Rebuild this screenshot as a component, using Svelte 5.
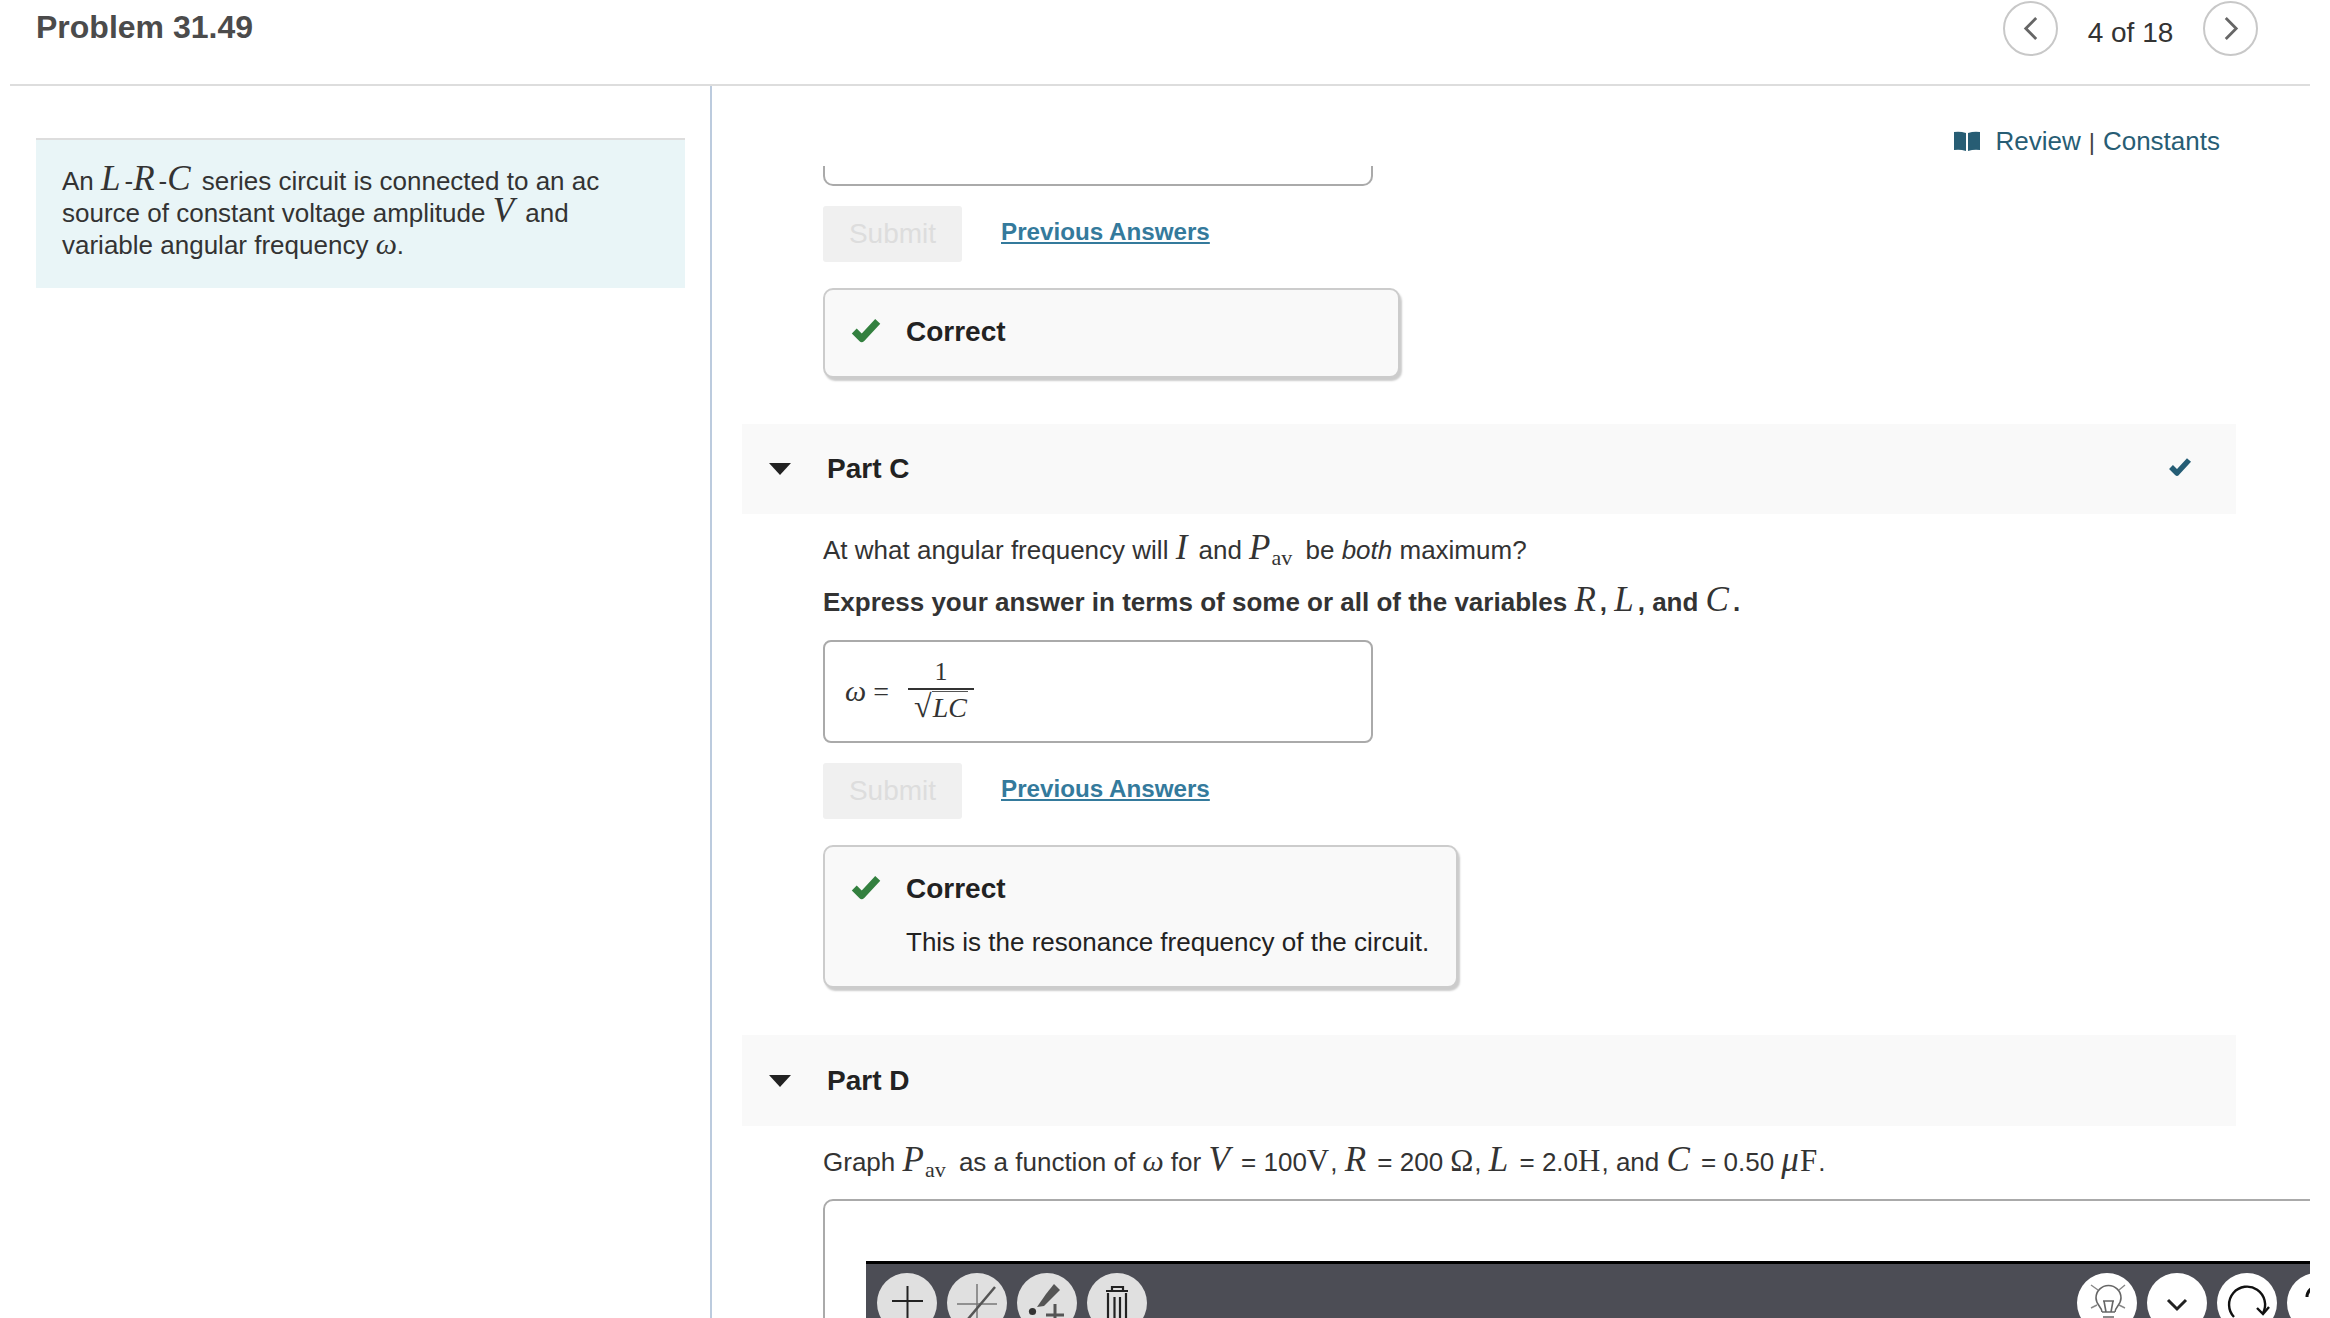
<script>
  const leftTools = ["plus", "line", "pen", "trash"];
</script>

{#snippet check()}
  <svg class="okay" viewBox="0 0 30 24" aria-hidden="true">
    <path d="M4 13l7 7L26 4" fill="none" stroke="#33803f" stroke-width="6.5" stroke-linejoin="round" />
  </svg>
{/snippet}

{#snippet submitRow()}
  <div class="actions">
    <button class="submit" disabled>Submit</button>
    <a class="prev" href="#prev">Previous Answers</a>
  </div>
{/snippet}

<div class="page">
  <header>
    <h1>Problem 31.49</h1>
    <nav>
      <button class="round" aria-label="Previous">
        <svg viewBox="0 0 54 54"><path d="M33 16L22 27l11 11" /></svg>
      </button>
      <span class="count">4 of 18</span>
      <button class="round" aria-label="Next">
        <svg viewBox="0 0 54 54"><path d="M22 16l11 11-11 11" /></svg>
      </button>
    </nav>
  </header>

  <div class="columns">
    <aside>
      <div class="intro">
        An <span class="m">L</span>-<span class="m">R</span>-<span class="m">C</span> series circuit is connected to an ac<br />
        source of constant voltage amplitude <span class="m">V</span> and<br />
        variable angular frequency <i class="w">ω</i>.
      </div>
    </aside>

    <main>
      <div class="links">
        <svg class="book" viewBox="0 0 26 21" aria-hidden="true">
          <path d="M0 1q6-1 12 1v18q-6-2-12-1zM14 2q6-2 12-1v18q-6-1-12 1z" fill="#275d74" />
        </svg>
        <a href="#review">Review</a>
        <span class="bar">|</span>
        <a href="#constants">Constants</a>
      </div>

      <div class="scroll">
        <div class="stub"></div>
        {@render submitRow()}
        <div class="feedback short">
          {@render check()}
          <strong>Correct</strong>
        </div>

        <div class="part first-part">
          <span class="tri"></span>
          <span class="part-name">Part C</span>
          <svg class="done" viewBox="0 0 24 19" aria-hidden="true">
            <path d="M3 10l6 6L21 3" fill="none" stroke="#255d75" stroke-width="5.5" stroke-linejoin="round" />
          </svg>
        </div>
        <div class="body">
          <p class="q">At what angular frequency will <span class="m">I</span> and <span class="m tight">P</span><sub>av</sub> be <em>both</em> maximum?</p>
          <p class="q b">Express your answer in terms of some or all of the variables <span class="m">R</span>, <span class="m">L</span>, and <span class="m">C</span>.</p>

          <div class="answer">
            <span class="eq"><i class="w">ω</i> =</span>
            <span class="frac">
              <span class="num">1</span>
              <span class="den"><span class="root">√</span><span class="rad">LC</span></span>
            </span>
          </div>

          {@render submitRow()}
          <div class="feedback tall">
            {@render check()}
            <strong>Correct</strong>
            <p>This is the resonance frequency of the circuit.</p>
          </div>
        </div>

        <div class="part second-part">
          <span class="tri"></span>
          <span class="part-name">Part D</span>
        </div>
        <div class="body">
          <p class="q">Graph <span class="m tight">P</span><sub>av</sub> as a function of <i class="w">ω</i> for <span class="m">V</span> = 100<span class="u">V</span>, <span class="m">R</span> = 200 <span class="u">Ω</span>, <span class="m">L</span> = 2.0<span class="u">H</span>, and <span class="m">C</span> = 0.50 <span class="m tight">μ</span><span class="u">F</span>.</p>

          <div class="graph">
            <div class="toolbar">
              <div class="tools">
                {#each leftTools as tool}
                  <button class="tool" aria-label={tool}>
                    <svg viewBox="0 0 60 60">
                      {#if tool === "plus"}
                        <path d="M30.5 13v32M15 28h31" stroke="#222" stroke-width="2" fill="none" />
                      {:else if tool === "line"}
                        <path d="M30 11v38M10 31h40" stroke="#777" stroke-width="1.5" fill="none" />
                        <path d="M16 52L48 14" stroke="#555" stroke-width="2.5" fill="none" />
                      {:else if tool === "pen"}
                        <path d="M29 21L37 11l6 6L27 33l-7 1z" fill="#555" />
                        <circle cx="15.5" cy="38.5" r="3.6" fill="#333" />
                        <path d="M38 31v25M29 42h18" stroke="#555" stroke-width="3" fill="none" />
                      {:else}
                        <path d="M19 18h22M25 17v-3h11v3M21 20v36h18V20M27.5 24v30M33 24v30" stroke="#222" stroke-width="2.2" fill="none" />
                      {/if}
                    </svg>
                  </button>
                {/each}
              </div>
              <div class="tools right">
                <button class="tool white" aria-label="hint">
                  <svg viewBox="0 0 60 60">
                    <path d="M25 39c0-5-6-7-6-14a12.5 12.5 0 0 1 25 0c0 7-6 9-6 14M26 28h11M27 28l2 11M36 28l-2 11M25 39h13M26 44h11" stroke="#666" stroke-width="1.6" fill="none" />
                    <path d="M14 12l7 5M48 12l-6 5M14 35l6-3M48 35l-6-3" stroke="#888" stroke-width="1.4" />
                  </svg>
                </button>
                <button class="tool white" aria-label="more">
                  <svg viewBox="0 0 60 60"><path d="M21 27l9 9 9-9" stroke="#222" stroke-width="3" fill="none" /></svg>
                </button>
                <button class="tool white" aria-label="reset">
                  <svg viewBox="0 0 60 60">
                    <path d="M46 40A18 18 0 1 0 17 44" stroke="#111" stroke-width="2.4" fill="none" />
                    <path d="M40 35l6 6 6-7" stroke="#111" stroke-width="2.4" fill="none" />
                  </svg>
                </button>
                <button class="tool white" aria-label="help">
                  <svg viewBox="0 0 60 60"><path d="M20 24a10 10 0 0 1 20 0c0 7-10 8-10 16" stroke="#111" stroke-width="3" fill="none" /></svg>
                </button>
              </div>
            </div>
          </div>
        </div>
      </div>
    </main>
  </div>
</div>

<style>
  :global(body) {
    background: #fff;
  }
  .page {
    width: 2330px;
    height: 1318px;
    overflow: hidden;
    font-family: "Liberation Sans", Arial, sans-serif;
    font-size: 26px;
    color: #333;
  }
  header {
    margin-left: 10px;
    width: 2300px;
    height: 86px;
    box-sizing: border-box;
    border-bottom: 2px solid #ddd;
    display: flex;
    justify-content: space-between;
  }
  h1 {
    margin: 8px 0 0 26px;
    font-size: 32px;
    line-height: 38px;
    color: #4b4b4b;
  }
  nav {
    display: flex;
    align-items: flex-start;
    margin: 1px 52px 0 0;
  }
  .round {
    width: 55px;
    height: 55px;
    padding: 0;
    border: 2px solid #c8c8c8;
    border-radius: 50%;
    background: #fff;
  }
  .round svg {
    display: block;
    width: 51px;
    height: 51px;
    fill: none;
    stroke: #666;
    stroke-width: 3;
  }
  .count {
    width: 145px;
    text-align: center;
    font-size: 28px;
    line-height: 56px;
    margin-top: 4px;
  }
  .columns {
    margin-left: 10px;
    width: 2300px;
    height: 1232px;
    display: flex;
  }
  aside {
    flex: none;
    border-right: 2px solid #bccbde;
    padding: 52px 0 0 26px;
    width: 674px;
  }
  .intro {
    width: 649px;
    height: 150px;
    box-sizing: border-box;
    padding: 25px 0 0 26px;
    background: #e9f5f7;
    border-top: 2px solid #ddd;
    line-height: 32px;
    white-space: nowrap;
  }
  .m {
    font-family: "Liberation Serif", "Times New Roman", serif;
    font-style: italic;
    font-size: 35px;
    line-height: 1px;
    letter-spacing: 1px;
    margin-right: 3px;
  }
  .m.tight {
    margin-right: 0;
  }
  .u {
    font-family: "Liberation Serif", "Times New Roman", serif;
    font-size: 31px;
    line-height: 1px;
    margin-right: 1px;
  }
  .w {
    font-family: "Liberation Serif", "Times New Roman", serif;
    font-size: 30px;
    line-height: 1px;
  }
  main {
    flex: 1;
    min-width: 0;
    overflow: hidden;
    padding-left: 30px;
  }
  .links {
    height: 80px;
    display: flex;
    align-items: center;
    justify-content: flex-end;
    padding: 31px 90px 0 0;
    box-sizing: border-box;
    gap: 8px;
    color: #275d74;
  }
  .links a {
    color: #275d74;
    text-decoration: none;
  }
  .book {
    width: 26px;
    height: 21px;
    margin-right: 7px;
  }
  .bar {
    color: #444;
    font-size: 24px;
  }
  .stub {
    margin-left: 81px;
    width: 550px;
    height: 20px;
    box-sizing: border-box;
    border: 2px solid #aaa;
    border-top: none;
    border-radius: 0 0 10px 10px;
  }
  .actions {
    margin: 20px 0 0 81px;
    display: flex;
    align-items: center;
    gap: 39px;
  }
  .body .actions {
    margin-left: 0;
    margin-top: 20px;
  }
  .submit {
    width: 139px;
    height: 56px;
    padding: 0;
    border: none;
    border-radius: 3px;
    background: #f0f0f0;
    color: #ddd;
    font: 28px "Liberation Sans", Arial, sans-serif;
  }
  .prev {
    font-weight: bold;
    font-size: 24.2px;
    color: #347a9c;
    margin-top: -4px;
  }
  .feedback {
    box-sizing: border-box;
    margin: 26px 0 0 81px;
    position: relative;
    background: #f9f9f9;
    border: 2px solid #ccc;
    border-radius: 10px;
    box-shadow: 2px 3px 2px #ccc;
    padding: 24px 0 0 81px;
  }
  .body .feedback {
    margin-left: 0;
  }
  .feedback.short {
    width: 577px;
    height: 90px;
  }
  .feedback.tall {
    width: 635px;
    height: 143px;
  }
  .feedback strong {
    display: block;
    font-size: 28px;
    line-height: 36px;
    color: #222;
  }
  .feedback p {
    margin: 17px 0 0;
    font-size: 26px;
    line-height: 36px;
    color: #222;
  }
  .okay {
    position: absolute;
    left: 25px;
    top: 27px;
    width: 32px;
    height: 26px;
  }
  .part {
    width: 1494px;
    height: 90px;
    background: #f9f9f9;
    display: flex;
    align-items: center;
    padding-left: 27px;
    box-sizing: border-box;
  }
  .first-part {
    margin-top: 46px;
  }
  .second-part {
    margin-top: 47px;
    height: 91px;
  }
  .tri {
    width: 0;
    height: 0;
    border-left: 11px solid transparent;
    border-right: 11px solid transparent;
    border-top: 12px solid #222;
  }
  .part-name {
    margin-left: 36px;
    font-size: 28px;
    font-weight: bold;
    color: #222;
  }
  .done {
    width: 24px;
    height: 19px;
    margin-left: auto;
    margin-right: 44px;
    margin-top: -5px;
  }
  .body {
    padding-left: 81px;
  }
  .q {
    margin: 16px 0 0;
    line-height: 36px;
    white-space: nowrap;
    font-size: 26px;
  }
  .q:first-child {
    margin-top: 18px;
  }
  .b {
    font-weight: bold;
  }
  .b .m {
    font-weight: normal;
  }
  sub {
    font-family: "Liberation Serif", "Times New Roman", serif;
    font-size: 22px;
    line-height: 1px;
    margin-right: 6px;
  }
  .answer {
    margin-top: 20px;
    width: 550px;
    height: 103px;
    box-sizing: border-box;
    border: 2px solid #aaa;
    border-radius: 8px;
    display: flex;
    align-items: center;
    padding-left: 20px;
    font-family: "Liberation Serif", "Times New Roman", serif;
    font-size: 28px;
  }
  .eq {
    width: 63px;
    flex: none;
    white-space: nowrap;
  }
  .frac {
    display: flex;
    flex-direction: column;
    align-items: center;
    width: 66px;
  }
  .num {
    line-height: 30px;
    font-size: 26px;
    border-bottom: 2px solid #333;
    width: 100%;
    text-align: center;
    padding-bottom: 1px;
  }
  .den {
    line-height: 36px;
    white-space: nowrap;
  }
  .root {
    font-size: 32px;
    line-height: 1px;
  }
  .rad {
    font-style: italic;
    border-top: 1px solid #555;
    padding: 0 1px;
  }
  .graph {
    margin-top: 19px;
    width: 1700px;
    height: 300px;
    box-sizing: border-box;
    border: 2px solid #aaa;
    border-radius: 10px 0 0 0;
    padding: 60px 0 0 41px;
  }
  .toolbar {
    width: 1500px;
    height: 120px;
    box-sizing: border-box;
    background: #4c4d55;
    border-top: 3px solid #000;
    padding: 9px 19px 0 11px;
    display: flex;
    justify-content: space-between;
  }
  .tools {
    display: flex;
    gap: 10px;
  }
  .tool {
    width: 60px;
    height: 60px;
    padding: 0;
    border: none;
    border-radius: 50%;
    background: #e0e0e0;
  }
  .tool.white {
    background: #fff;
  }
  .tool svg {
    display: block;
    width: 60px;
    height: 60px;
  }
</style>
